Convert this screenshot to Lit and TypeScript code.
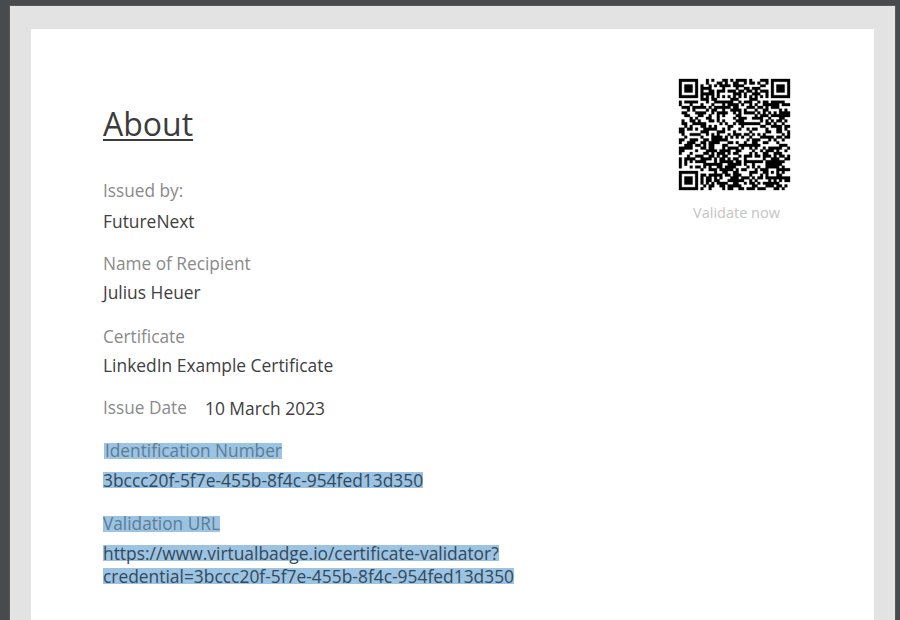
import { LitElement, html, css, svg } from "lit";
import { customElement } from "lit/decorators.js";

const PAYLOAD = "https://www.virtualbadge.io/certificate-validator?credential=3bccc20f-5f7e-455b-8f4c-954fed13d350";
const SIZE = 41;

function gfMul(a: number, b: number): number {
  let r = 0;
  for (let i = 7; i >= 0; i--) {
    r = (r << 1) ^ ((r >>> 7) * 0x11d);
    r ^= ((b >>> i) & 1) * a;
  }
  return r & 255;
}

function codewords(text: string): number[] {
  const bits: number[] = [];
  const push = (v: number, n: number) => {
    for (let i = n - 1; i >= 0; i--) bits.push((v >>> i) & 1);
  };
  push(4, 4);
  push(text.length, 8);
  for (const c of text) push(c.charCodeAt(0), 8);
  const cap = 108 * 8;
  push(0, Math.min(4, cap - bits.length));
  while (bits.length % 8) bits.push(0);
  for (let p = 0xec; bits.length < cap; p ^= 0xec ^ 0x11) push(p, 8);
  const data: number[] = [];
  for (let i = 0; i < bits.length; i += 8) data.push(parseInt(bits.slice(i, i + 8).join(""), 2));
  const deg = 16;
  const gen = new Array(deg).fill(0);
  gen[deg - 1] = 1;
  let root = 1;
  for (let i = 0; i < deg; i++) {
    for (let j = 0; j < deg; j++) {
      gen[j] = gfMul(gen[j], root);
      if (j + 1 < deg) gen[j] ^= gen[j + 1];
    }
    root = gfMul(root, 2);
  }
  const blocks: number[][] = [];
  const eccs: number[][] = [];
  for (let k = 0; k < 4; k++) {
    const blk = data.slice(k * 27, (k + 1) * 27);
    const ecc = new Array(deg).fill(0);
    for (const b of blk) {
      const f = b ^ ecc.shift();
      ecc.push(0);
      gen.forEach((g, i) => (ecc[i] ^= gfMul(g, f)));
    }
    blocks.push(blk);
    eccs.push(ecc);
  }
  const out: number[] = [];
  for (let i = 0; i < 27; i++) for (let k = 0; k < 4; k++) out.push(blocks[k][i]);
  for (let i = 0; i < 16; i++) for (let k = 0; k < 4; k++) out.push(eccs[k][i]);
  return out;
}

const MASKS: ((x: number, y: number) => boolean)[] = [
  (x, y) => (x + y) % 2 === 0,
  (_x, y) => y % 2 === 0,
  (x) => x % 3 === 0,
  (x, y) => (x + y) % 3 === 0,
  (x, y) => (Math.floor(x / 3) + Math.floor(y / 2)) % 2 === 0,
  (x, y) => ((x * y) % 2) + ((x * y) % 3) === 0,
  (x, y) => (((x * y) % 2) + ((x * y) % 3)) % 2 === 0,
  (x, y) => ((x + y) % 2 + (x * y) % 3) % 2 === 0,
];

function build(mask: number): boolean[][] {
  const m = Array.from({ length: SIZE }, () => new Array<boolean>(SIZE).fill(false));
  const fn = Array.from({ length: SIZE }, () => new Array<boolean>(SIZE).fill(false));
  const set = (x: number, y: number, v: boolean) => {
    if (x < 0 || y < 0 || x >= SIZE || y >= SIZE) return;
    m[y][x] = v;
    fn[y][x] = true;
  };
  for (let i = 0; i < SIZE; i++) {
    set(6, i, i % 2 === 0);
    set(i, 6, i % 2 === 0);
  }
  const finder = (cx: number, cy: number) => {
    for (let dy = -4; dy <= 4; dy++)
      for (let dx = -4; dx <= 4; dx++) {
        const d = Math.max(Math.abs(dx), Math.abs(dy));
        set(cx + dx, cy + dy, d !== 2 && d !== 4);
      }
  };
  finder(3, 3);
  finder(SIZE - 4, 3);
  finder(3, SIZE - 4);
  for (let dy = -2; dy <= 2; dy++)
    for (let dx = -2; dx <= 2; dx++) set(34 + dx, 34 + dy, Math.max(Math.abs(dx), Math.abs(dy)) !== 1);

  let r = mask;
  for (let i = 0; i < 10; i++) r = (r << 1) ^ ((r >>> 9) * 0x537);
  const b = ((mask << 10) | r) ^ 0x5412;
  const bit = (i: number) => ((b >>> i) & 1) === 1;
  for (let i = 0; i <= 5; i++) set(8, i, bit(i));
  set(8, 7, bit(6));
  set(8, 8, bit(7));
  set(7, 8, bit(8));
  for (let i = 9; i < 15; i++) set(14 - i, 8, bit(i));
  for (let i = 0; i < 8; i++) set(SIZE - 1 - i, 8, bit(i));
  for (let i = 8; i < 15; i++) set(8, SIZE - 15 + i, bit(i));
  set(8, SIZE - 8, true);

  const all = codewords(PAYLOAD);
  let i = 0;
  for (let right = SIZE - 1; right >= 1; right -= 2) {
    if (right === 6) right = 5;
    for (let v = 0; v < SIZE; v++)
      for (let j = 0; j < 2; j++) {
        const x = right - j;
        const y = ((right + 1) & 2) === 0 ? SIZE - 1 - v : v;
        if (!fn[y][x] && i < all.length * 8) {
          m[y][x] = ((all[i >>> 3] >>> (7 - (i & 7))) & 1) === 1;
          i++;
        }
      }
  }
  for (let y = 0; y < SIZE; y++)
    for (let x = 0; x < SIZE; x++) if (!fn[y][x] && MASKS[mask](x, y)) m[y][x] = !m[y][x];
  return m;
}

function penalty(m: boolean[][]): number {
  let p = 0;
  const line = (get: (i: number) => boolean) => {
    let run = 0;
    let prev = false;
    let s = "";
    for (let i = 0; i < SIZE; i++) {
      const c = get(i);
      s += c ? "1" : "0";
      if (i > 0 && c === prev) {
        run++;
        if (run === 5) p += 3;
        else if (run > 5) p++;
      } else run = 1;
      prev = c;
    }
    for (let i = 0; i + 11 <= SIZE; i++) {
      const w = s.slice(i, i + 11);
      if (w === "10111010000" || w === "00001011101") p += 40;
    }
  };
  for (let k = 0; k < SIZE; k++) {
    line((i) => m[k][i]);
    line((i) => m[i][k]);
  }
  let dark = 0;
  for (let y = 0; y < SIZE; y++)
    for (let x = 0; x < SIZE; x++) {
      if (m[y][x]) dark++;
      if (x < SIZE - 1 && y < SIZE - 1 && m[y][x] === m[y][x + 1] && m[y][x] === m[y + 1][x] && m[y][x] === m[y + 1][x + 1]) p += 3;
    }
  return p + Math.floor(Math.abs((dark * 100) / (SIZE * SIZE) - 50) / 5) * 10;
}

function qrPath(): string {
  let best = build(0);
  let score = penalty(best);
  for (let k = 1; k < 8; k++) {
    const c = build(k);
    const s = penalty(c);
    if (s < score) {
      best = c;
      score = s;
    }
  }
  let d = "";
  best.forEach((row, y) => {
    let x = 0;
    while (x < SIZE) {
      if (!row[x]) {
        x++;
        continue;
      }
      let e = x;
      while (e < SIZE && row[e]) e++;
      d += `M${x} ${y}H${e}V${y + 1}H${x}z`;
      x = e;
    }
  });
  return d;
}

@customElement("app-root")
export class AppRoot extends LitElement {
  static styles = css`
    :host {
      display: block;
      width: 900px;
      height: 620px;
      overflow: hidden;
      background: #474b4e;
      font-family: "Open Sans", "Noto Sans", sans-serif;
    }
    .frame {
      box-sizing: border-box;
      width: 885px;
      height: 614px;
      margin: 6px 5px 0 10px;
      padding: 23px 21px 0;
      background: #e3e3e3;
      box-shadow: 0 0 0 1px #55595c;
    }
    .sheet {
      box-sizing: border-box;
      height: 591px;
      padding: 0 84px 0 72px;
      background: #fff;
      display: flex;
      justify-content: space-between;
      align-items: flex-start;
    }
    .main {
      display: flex;
      flex-direction: column;
      padding-top: 73px;
    }
    h1 {
      margin: 0 0 34px;
      font-size: 32px;
      line-height: 44px;
      font-weight: 400;
      color: #3c3c3c;
      text-decoration: underline;
      text-decoration-thickness: 2px;
      text-underline-offset: 3px;
    }
    .field {
      display: flex;
      flex-direction: column;
      gap: 6px;
      margin-bottom: 23px;
    }
    .field.first {
      gap: 8px;
      margin-bottom: 21px;
    }
    .field.last {
      margin-bottom: 21px;
    }
    .field.sel {
      gap: 7px;
      margin-bottom: 22px;
    }
    .label,
    .value {
      line-height: 22px;
    }
    .label {
      font-size: 17.25px;
      color: #8a8a8a;
    }
    .value {
      font-size: 17.4px;
      color: #404040;
    }
    .row {
      display: flex;
      gap: 18px;
      margin-bottom: 21px;
    }
    .hl {
      display: block;
      width: fit-content;
      margin: 3px 0;
      line-height: 16px;
      background: #9cc3e1;
    }
    .sel .label.hl {
      color: #5c7d98;
    }
    .sel .value.hl {
      color: #32495c;
    }
    .indent {
      margin-left: 1px;
      padding-left: 1px;
    }
    .lines {
      display: flex;
      flex-direction: column;
      gap: 1px;
    }
    .qr {
      display: flex;
      flex-direction: column;
      align-items: center;
      padding-top: 50px;
      gap: 13px;
    }
    .qr svg {
      display: block;
      width: 111px;
      height: 111px;
      overflow: visible;
      filter: blur(0.2px);
    }
    .qr path {
      fill: #000;
      stroke: #000;
      stroke-width: 0.12;
    }
    .validate {
      font-size: 14.5px;
      line-height: 20px;
      color: #c4c4c4;
      padding-left: 4px;
    }
  `;

  private path = qrPath();

  render() {
    return html`
      <div class="frame">
        <div class="sheet">
          <div class="main">
            <h1>About</h1>
            <div class="field first">
              <span class="label">Issued by:</span>
              <span class="value">FutureNext</span>
            </div>
            <div class="field">
              <span class="label">Name of Recipient</span>
              <span class="value">Julius Heuer</span>
            </div>
            <div class="field last">
              <span class="label">Certificate</span>
              <span class="value">LinkedIn Example Certificate</span>
            </div>
            <div class="row">
              <span class="label">Issue Date</span>
              <span class="value">10 March 2023</span>
            </div>
            <div class="field sel">
              <span class="label hl indent">Identification Number</span>
              <span class="value hl">3bccc20f-5f7e-455b-8f4c-954fed13d350</span>
            </div>
            <div class="field sel">
              <span class="label hl">Validation URL</span>
              <div class="lines">
                <span class="value hl">https://www.virtualbadge.io/certificate-validator?</span>
                <span class="value hl">credential=3bccc20f-5f7e-455b-8f4c-954fed13d350</span>
              </div>
            </div>
          </div>
          <div class="qr">
            <svg viewBox="0 0 41 41">${svg`<path d=${this.path}></path>`}</svg>
            <span class="validate">Validate now</span>
          </div>
        </div>
      </div>
    `;
  }
}
